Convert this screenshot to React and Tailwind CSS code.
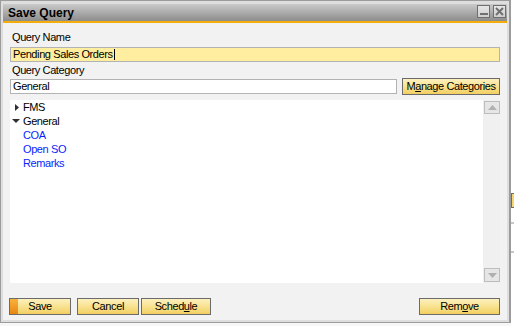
import React from 'react';

const Btn = ({ children, className = '', isDefault = false }) => (
  <button
    className={`relative h-[17px] border border-[#6b6b6b] bg-linear-to-b from-[#fcf0bd] via-[#f8e290] to-[#f2cf60] text-[11px] leading-[15px] text-black ${className}`}
  >
    {isDefault && (
      <span className="absolute left-0 top-0 h-full w-[8px] bg-linear-to-b from-[#f8b23a] to-[#e8860f]" />
    )}
    <span className="relative">{children}</span>
  </button>
);

const TreeRow = ({ arrow, children, blue = false }) => (
  <div className="flex h-[14px] items-center">
    <div className="flex w-[13px] items-center">
      {arrow === 'right' && (
        <svg width="4" height="7" viewBox="0 0 4 7" className="ml-[5px]">
          <path d="M0 0 L4 3.5 L0 7 Z" fill="#303030" />
        </svg>
      )}
      {arrow === 'down' && (
        <svg width="8" height="4" viewBox="0 0 8 4" className="ml-[2px]">
          <path d="M0 0 L8 0 L4 4 Z" fill="#303030" />
        </svg>
      )}
    </div>
    <span className={blue ? 'text-[#0a1eff]' : 'text-black'}>{children}</span>
  </div>
);

export default function App() {
  return (
    <div className="flex h-[326px] w-[514px] bg-[#f7f7f7] font-['Liberation_Sans',Arial,sans-serif] text-[11px] tracking-[-0.4px] text-black">
      <div className="flex h-[323px] w-[511px] flex-col border border-r-2 border-[#9c9c9c] bg-[#dedede] px-[2px] pb-[2px] pt-[3px]">
        {/* title bar */}
        <div className="flex h-[17px] items-start bg-linear-to-b from-[#cacaca] to-[#8d8d8d] pr-[1px] pt-[1px]">
          <span className="pl-[5px] text-[12px] font-bold leading-[16px] tracking-normal">Save Query</span>
          <div className="ml-auto flex gap-[3px]">
            <div className="flex h-[13px] w-[13px] items-end justify-center border border-[#6f6f6f] bg-linear-to-b from-[#e6e6e6] to-[#cfcfcf] pb-[2px]">
              <div className="h-[2px] w-[8px] bg-[#707070]" />
            </div>
            <div className="flex h-[13px] w-[13px] items-center justify-center border border-[#6f6f6f] bg-linear-to-b from-[#e6e6e6] to-[#cfcfcf]">
              <svg width="9" height="9" viewBox="0 0 9 9">
                <path d="M1 1 L8 8 M8 1 L1 8" stroke="#707070" strokeWidth="2" />
              </svg>
            </div>
          </div>
        </div>
        <div className="h-[2px] bg-[#f4ae0c]" />

        {/* body */}
        <div className="flex flex-1 flex-col bg-[#f2f2f2] pl-[7px] pr-[7px] pt-[8px]">
          <div className="h-[13px] pl-[2px] leading-[13px]">Query Name</div>
          <div className="mt-[3px] flex h-[15px] items-center border border-[#b3b3b3] bg-[#ffee9f] pl-[2px]">
            <span className="leading-[13px]">Pending Sales Orders</span>
            <span className="ml-[1px] h-[11px] w-[1px] bg-black" />
          </div>

          <div className="mt-[2px] h-[13px] pl-[2px] leading-[13px]">Query Category</div>
          <div className="mt-[1px] flex h-[17px] items-center">
            <div className="flex h-[15px] w-[387px] items-center border border-[#b3b3b3] bg-white pl-[2px]">
              <span className="leading-[13px]">General</span>
            </div>
            <Btn className="ml-auto w-[98px]">
              M<span className="underline underline-offset-1">a</span>nage Categories
            </Btn>
          </div>

          {/* tree */}
          <div className="mt-[5px] flex h-[183px]">
            <div className="flex-1 bg-white">
              <TreeRow arrow="right">FMS</TreeRow>
              <TreeRow arrow="down">General</TreeRow>
              <TreeRow blue>COA</TreeRow>
              <TreeRow blue>Open SO</TreeRow>
              <TreeRow blue>Remarks</TreeRow>
            </div>
            <div className="flex w-[17px] flex-col justify-between bg-[#f0f0f0] py-[1px] pl-[1px]">
              <div className="flex h-[13px] w-[16px] items-center justify-center border border-[#bdbdbd] bg-[#e6e6e6]">
                <svg width="9" height="5" viewBox="0 0 9 5">
                  <path d="M0 5 L4.5 0 L9 5 Z" fill="#b0b0b0" />
                </svg>
              </div>
              <div className="flex h-[14px] w-[16px] items-center justify-center border border-[#bdbdbd] bg-[#e6e6e6]">
                <svg width="9" height="5" viewBox="0 0 9 5">
                  <path d="M0 0 L9 0 L4.5 5 Z" fill="#b0b0b0" />
                </svg>
              </div>
            </div>
          </div>

          {/* buttons */}
          <div className="mt-[15px] flex h-[17px] items-center">
            <Btn isDefault className="-ml-px w-[62px]">Save</Btn>
            <Btn className="ml-[6px] w-[62px]">Cancel</Btn>
            <Btn className="ml-[2px] w-[70px]">
              Sched<span className="underline underline-offset-1">u</span>le
            </Btn>
            <Btn className="ml-auto w-[81px]">
              Rem<span className="underline underline-offset-1">o</span>ve
            </Btn>
          </div>
        </div>
      </div>

      {/* sliver of the window behind */}
      <div className="flex flex-1 flex-col bg-white">
        <div className="h-[193px]" />
        <div className="h-[15px] border-y border-l border-[#6b6b6b] bg-[#f5d56c]" />
        <div className="mt-[14px] h-[2px] bg-[#c8c8c8]" />
        <div className="mt-[27px] h-[2px] bg-[#c8c8c8]" />
      </div>
    </div>
  );
}
